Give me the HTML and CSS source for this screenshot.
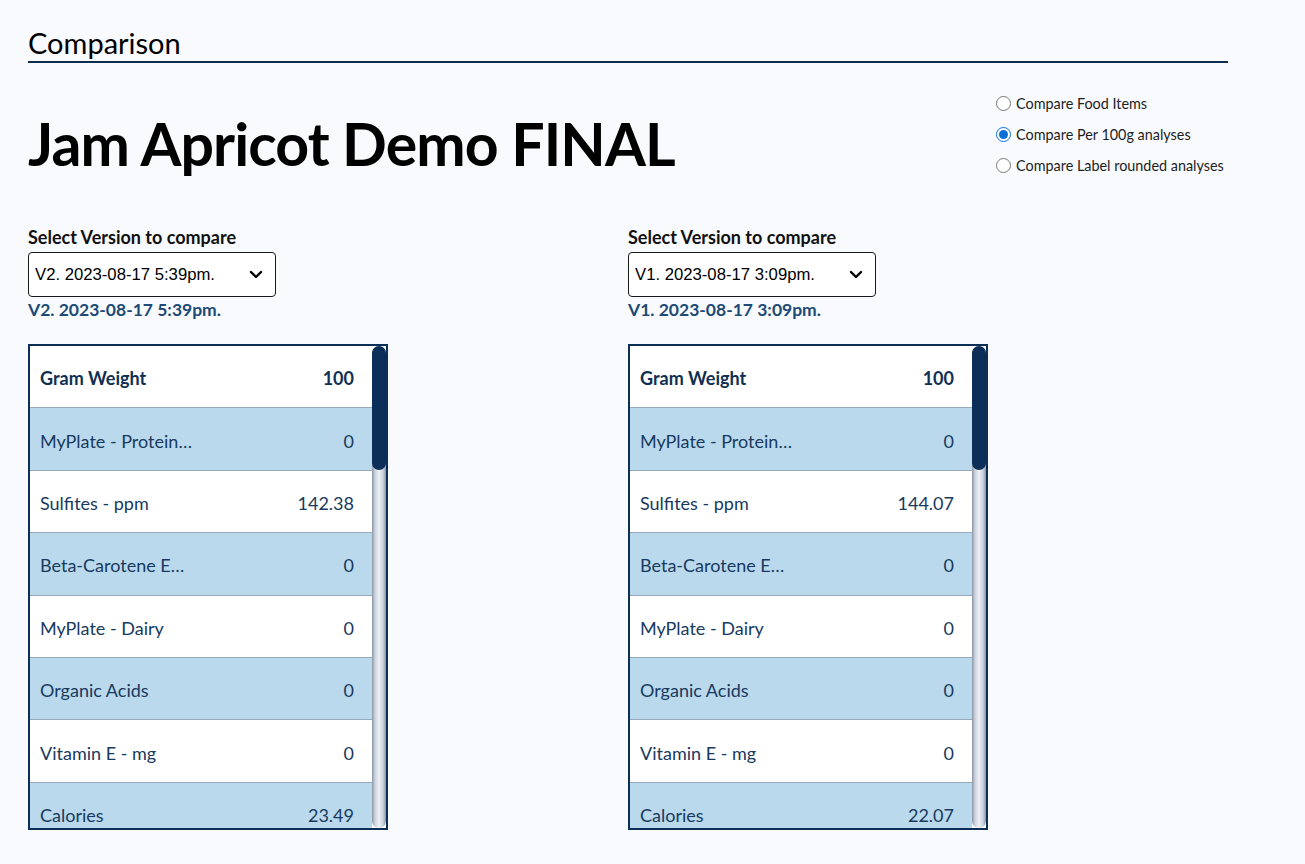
FILE: index.html
```html
<!DOCTYPE html>
<html lang="en">
<head>
<meta charset="utf-8">
<title>Comparison</title>
<link rel="stylesheet" href="styles.css">
</head>
<body>
<main class="page">
  <h2 class="section-title">Comparison</h2>

  <div class="top-row">
    <h1 class="item-title">Jam Apricot Demo FINAL</h1>
    <div class="modes">
      <label class="mode"><input type="radio" name="mode"> <span>Compare Food Items</span></label>
      <label class="mode"><input type="radio" name="mode" checked> <span>Compare Per 100g analyses</span></label>
      <label class="mode"><input type="radio" name="mode"> <span>Compare Label rounded analyses</span></label>
    </div>
  </div>

  <div class="columns">
    <section class="col">
      <label class="sel-label">Select Version to compare</label>
      <div class="sel-wrap">
        <select class="sel">
          <option selected>V2. 2023-08-17 5:39pm.</option>
          <option>V1. 2023-08-17 3:09pm.</option>
        </select>
        <svg class="chev" width="14" height="9" viewBox="0 0 14 9"><path d="M2 2 L7 7 L12 2" fill="none" stroke="#000" stroke-width="2.4" stroke-linecap="round" stroke-linejoin="round"/></svg>
      </div>
      <div class="ver-name">V2. 2023-08-17 5:39pm.</div>
      <div class="grid-box">
        <div class="rows">
          <div class="row head"><span class="lbl">Gram Weight</span><span class="val">100</span></div>
          <div class="row alt"><span class="lbl" title="MyPlate - Protein Foods">MyPlate - Protein…</span><span class="val">0</span></div>
          <div class="row"><span class="lbl">Sulfites - ppm</span><span class="val">142.38</span></div>
          <div class="row alt"><span class="lbl" title="Beta-Carotene Equivalents">Beta-Carotene E…</span><span class="val">0</span></div>
          <div class="row"><span class="lbl">MyPlate - Dairy</span><span class="val">0</span></div>
          <div class="row alt"><span class="lbl">Organic Acids</span><span class="val">0</span></div>
          <div class="row"><span class="lbl">Vitamin E - mg</span><span class="val">0</span></div>
          <div class="row alt"><span class="lbl">Calories</span><span class="val">23.49</span></div>
        </div>
        <div class="scrollbar"><div class="thumb"></div></div>
      </div>
    </section>

    <section class="col">
      <label class="sel-label">Select Version to compare</label>
      <div class="sel-wrap">
        <select class="sel">
          <option>V2. 2023-08-17 5:39pm.</option>
          <option selected>V1. 2023-08-17 3:09pm.</option>
        </select>
        <svg class="chev" width="14" height="9" viewBox="0 0 14 9"><path d="M2 2 L7 7 L12 2" fill="none" stroke="#000" stroke-width="2.4" stroke-linecap="round" stroke-linejoin="round"/></svg>
      </div>
      <div class="ver-name">V1. 2023-08-17 3:09pm.</div>
      <div class="grid-box">
        <div class="rows">
          <div class="row head"><span class="lbl">Gram Weight</span><span class="val">100</span></div>
          <div class="row alt"><span class="lbl" title="MyPlate - Protein Foods">MyPlate - Protein…</span><span class="val">0</span></div>
          <div class="row"><span class="lbl">Sulfites - ppm</span><span class="val">144.07</span></div>
          <div class="row alt"><span class="lbl" title="Beta-Carotene Equivalents">Beta-Carotene E…</span><span class="val">0</span></div>
          <div class="row"><span class="lbl">MyPlate - Dairy</span><span class="val">0</span></div>
          <div class="row alt"><span class="lbl">Organic Acids</span><span class="val">0</span></div>
          <div class="row"><span class="lbl">Vitamin E - mg</span><span class="val">0</span></div>
          <div class="row alt"><span class="lbl">Calories</span><span class="val">22.07</span></div>
        </div>
        <div class="scrollbar"><div class="thumb"></div></div>
      </div>
    </section>
  </div>
</main>
</body>
</html>
```

FILE: styles.css
```css
* { box-sizing: border-box; }

html, body {
  margin: 0;
  padding: 0;
  background: #f8fafd;
}

body {
  font-family: Lato, "Noto Sans", "Liberation Sans", sans-serif;
  color: #000;
}

.page {
  width: 1200px;
  margin-left: 28px;
  padding-top: 26px;
}

.section-title {
  margin: 0;
  font-size: 29px;
  font-weight: 400;
  line-height: 34px;
  padding-bottom: 1px;
  border-bottom: 2px solid #0d2d4e;
}

.top-row {
  display: flex;
  justify-content: space-between;
  align-items: flex-start;
}

.item-title {
  margin: 48px 0 0 0;
  font-size: 59px;
  font-weight: 700;
  line-height: 66px;
  letter-spacing: -0.9px;
}

.modes {
  display: flex;
  flex-direction: column;
  padding-top: 25px;
  width: 232px;
}

.mode {
  display: flex;
  align-items: center;
  height: 31px;
  font-size: 14.4px;
  color: #1e1e1e;
}

.mode input {
  margin: 0 5px 0 0;
  width: 15px;
  height: 15px;
  accent-color: #0b6fd6;
}

.columns {
  display: flex;
  margin-top: 45px;
}

.col {
  width: 600px;
  display: flex;
  flex-direction: column;
  align-items: flex-start;
}

.sel-label {
  font-size: 18px;
  font-weight: 700;
  line-height: 22px;
  color: #111;
}

.sel-wrap {
  position: relative;
  margin-top: 4px;
  width: 248px;
  height: 45px;
}

.sel {
  appearance: none;
  -webkit-appearance: none;
  width: 100%;
  height: 100%;
  border: 1px solid #1a1a1a;
  border-radius: 4px;
  background: #fff;
  font-family: "Liberation Sans", Arial, sans-serif;
  font-size: 16.7px;
  color: #000;
  padding: 0 30px 0 6px;
}

.chev {
  position: absolute;
  right: 13px;
  top: 18px;
  pointer-events: none;
}

.ver-name {
  margin-top: 3px;
  font-size: 17.5px;
  font-weight: 700;
  line-height: 20px;
  color: #1d4a76;
}

.grid-box {
  margin-top: 24px;
  width: 360px;
  height: 486px;
  border: 2px solid #0c2f57;
  background: #fff;
  display: flex;
  overflow: hidden;
}

.rows {
  flex: 1;
  display: flex;
  flex-direction: column;
  overflow: hidden;
}

.row {
  flex: none;
  height: 62.4px;
  display: flex;
  align-items: center;
  justify-content: space-between;
  padding: 3px 18px 0 10px;
  background: #fff;
  border-bottom: 1px solid #97aabb;
  font-size: 18px;
  color: #183a5e;
}

.row.alt {
  background: #bad9ed;
}

.row.head {
  font-weight: 700;
  color: #112f52;
}

.lbl, .val {
  white-space: nowrap;
}

.scrollbar {
  flex: none;
  width: 14px;
  display: flex;
  flex-direction: column;
  background: linear-gradient(to right, #8893a5 0%, #c9d0db 20%, #eef1f6 50%, #c9d0db 80%, #8893a5 100%);
  border-radius: 7px;
}

.thumb {
  height: 124px;
  background: #0c2f5a;
  border-radius: 7px;
}
```
